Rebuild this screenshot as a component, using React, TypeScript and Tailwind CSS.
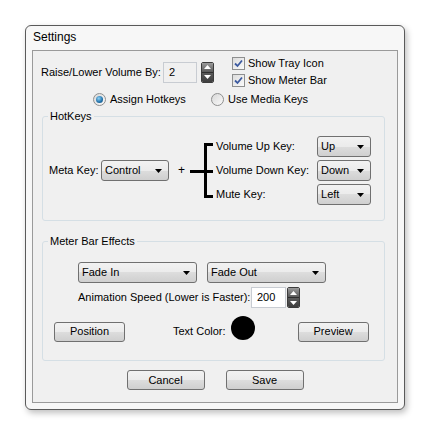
import React from "react";

const ctl =
  "border border-[#707070] rounded-[3px] bg-[linear-gradient(#f2f2f2,#ebebeb_50%,#dddddd_50%,#cfcfcf)]";

const Select = ({ value, w }: { value: string; w: string }) => (
  <div className={`${ctl} ${w} h-[21px] flex items-center justify-between pl-[3px] pr-[6px]`}>
    <span>{value}</span>
    <svg width="7" height="4" viewBox="0 0 7 4">
      <path d="M0 0h7L3.5 4z" fill="#000" />
    </svg>
  </div>
);

const Button = ({ label, w }: { label: string; w: string }) => (
  <div className={`${ctl} ${w} h-[20px] flex items-center justify-center`}>{label}</div>
);

const Spin = () => (
  <div className="flex flex-col w-[13px] h-[21px] rounded-[2px] overflow-hidden border border-[#3c3c3c]">
    <div className="flex-1 flex items-center justify-center bg-[linear-gradient(#9a9a9a,#5a5a5a)]">
      <svg width="7" height="4" viewBox="0 0 7 4">
        <path d="M0 4L3.5 0 7 4z" fill="#fff" />
      </svg>
    </div>
    <div className="flex-1 flex items-center justify-center bg-[linear-gradient(#5a5a5a,#3e3e3e)] border-t border-[#2e2e2e]">
      <svg width="7" height="4" viewBox="0 0 7 4">
        <path d="M0 0h7L3.5 4z" fill="#fff" />
      </svg>
    </div>
  </div>
);

const Checkbox = ({ label }: { label: string }) => (
  <div className="flex items-center h-[17px] gap-[3px]">
    <div className="w-[13px] h-[13px] border border-[#8e8f8f] bg-[linear-gradient(135deg,#dcdcdc,#fbfbfb)] p-[1px]">
      <svg width="9" height="9" viewBox="0 0 9 9">
        <path d="M1 4.5L3.5 7 8 1.5" stroke="#3c5aa0" strokeWidth="1.8" fill="none" />
      </svg>
    </div>
    <span>{label}</span>
  </div>
);

const Radio = ({ label, on, w }: { label: string; on?: boolean; w?: string }) => (
  <div className={`flex items-center gap-[4px] ${w ?? ""}`}>
    <div className="w-[13px] h-[13px] rounded-full border border-[#8e8f8f] bg-[linear-gradient(135deg,#d8d8d8,#fafafa)] flex items-center justify-center">
      {on && (
        <div className="w-[7px] h-[7px] rounded-full bg-[radial-gradient(circle_at_40%_35%,#8fd3f7,#1f6fa8_60%,#1b4f7a)]" />
      )}
    </div>
    <span>{label}</span>
  </div>
);

const Bracket = () => (
  <svg width="23" height="55" viewBox="0 0 23 55">
    <rect x="0" y="27" width="23" height="3" fill="#000" />
    <rect x="14" y="0" width="3" height="55" fill="#000" />
    <rect x="14" y="0" width="9" height="3" fill="#000" />
    <rect x="14" y="52" width="9" height="3" fill="#000" />
  </svg>
);

export default function App() {
  return (
    <div className="w-[426px] h-[433px] bg-white pt-[25px] pl-[25px] font-['Liberation_Sans',Arial,sans-serif] text-[11px] leading-[13px] text-black">
      <div className="w-[380px] h-[385px] rounded-[6px] border border-[#5a5a5a] bg-[#f7f7f7] shadow-[2px_3px_6px_rgba(0,0,0,0.25)] flex flex-col">
        <div className="h-[24px] pl-[7px] flex items-center text-[12px] pb-[1px]">Settings</div>

        <div className="mx-[6px] h-[353px] border border-[#9a9a9a] bg-[#f0f0f0] flex flex-col">
          {/* top options */}
          <div className="flex items-center pl-[8px] pt-[4px] h-[38px]">
            <span className="w-[122px]">Raise/Lower Volume By:</span>
            <div className="w-[34px] h-[21px] border border-[#c8ccd2] bg-[#f0f0f0] flex items-center pl-[5px]">2</div>
            <div className="ml-[4px]">
              <Spin />
            </div>
            <div className="ml-[18px] flex flex-col">
              <Checkbox label="Show Tray Icon" />
              <Checkbox label="Show Meter Bar" />
            </div>
          </div>

          <div className="h-[21px] flex items-center pl-[60px]">
            <Radio label="Assign Hotkeys" on w="w-[118px]" />
            <Radio label="Use Media Keys" />
          </div>

          {/* hotkeys group */}
          <fieldset className="ml-[9px] w-[343px] border border-[#d5dfe5] rounded-[3px] pt-[13px] pb-[15px]">
            <legend className="ml-[5px] px-[2px]">HotKeys</legend>
            <div className="flex items-center pl-[6px]">
              <span className="w-[52px]">Meta Key:</span>
              <Select value="Control" w="w-[68px]" />
              <span className="ml-[9px] mr-[5px] text-[12px]">+</span>
              <Bracket />
              <div className="ml-[3px] flex flex-col gap-[3px]">
                {[
                  ["Volume Up Key:", "Up"],
                  ["Volume Down Key:", "Down"],
                  ["Mute Key:", "Left"],
                ].map(([l, v]) => (
                  <div key={l} className="flex items-center">
                    <span className="w-[101px]">{l}</span>
                    <Select value={v} w="w-[54px]" />
                  </div>
                ))}
              </div>
            </div>
          </fieldset>

          {/* meter bar group */}
          <fieldset className="mt-[14px] ml-[9px] w-[343px] border border-[#d5dfe5] rounded-[3px] pt-[14px] pb-[16px]">
            <legend className="ml-[5px] px-[2px]">Meter Bar Effects</legend>
            <div className="flex gap-[10px] pl-[35px]">
              <Select value="Fade In" w="w-[119px]" />
              <Select value="Fade Out" w="w-[119px]" />
            </div>
            <div className="flex items-center pl-[35px] mt-[4px]">
              <span className="w-[173px]">Animation Speed (Lower is Faster):</span>
              <div className="w-[35px] h-[21px] border border-[#c8ccd2] bg-white flex items-center pl-[5px]">200</div>
              <div className="ml-[1px]">
                <Spin />
              </div>
            </div>
            <div className="flex items-center pl-[11px] mt-[11px] h-[25px]">
              <Button label="Position" w="w-[71px]" />
              <span className="ml-[48px]">Text Color:</span>
              <div className="ml-[5px] w-[24px] h-[24px] rounded-full bg-black -mt-[7px]" />
              <div className="ml-[43px]">
                <Button label="Preview" w="w-[71px]" />
              </div>
            </div>
          </fieldset>

          <div className="mt-[9px] flex justify-center gap-[21px]">
            <Button label="Cancel" w="w-[78px]" />
            <Button label="Save" w="w-[78px]" />
          </div>
        </div>
      </div>
    </div>
  );
}
